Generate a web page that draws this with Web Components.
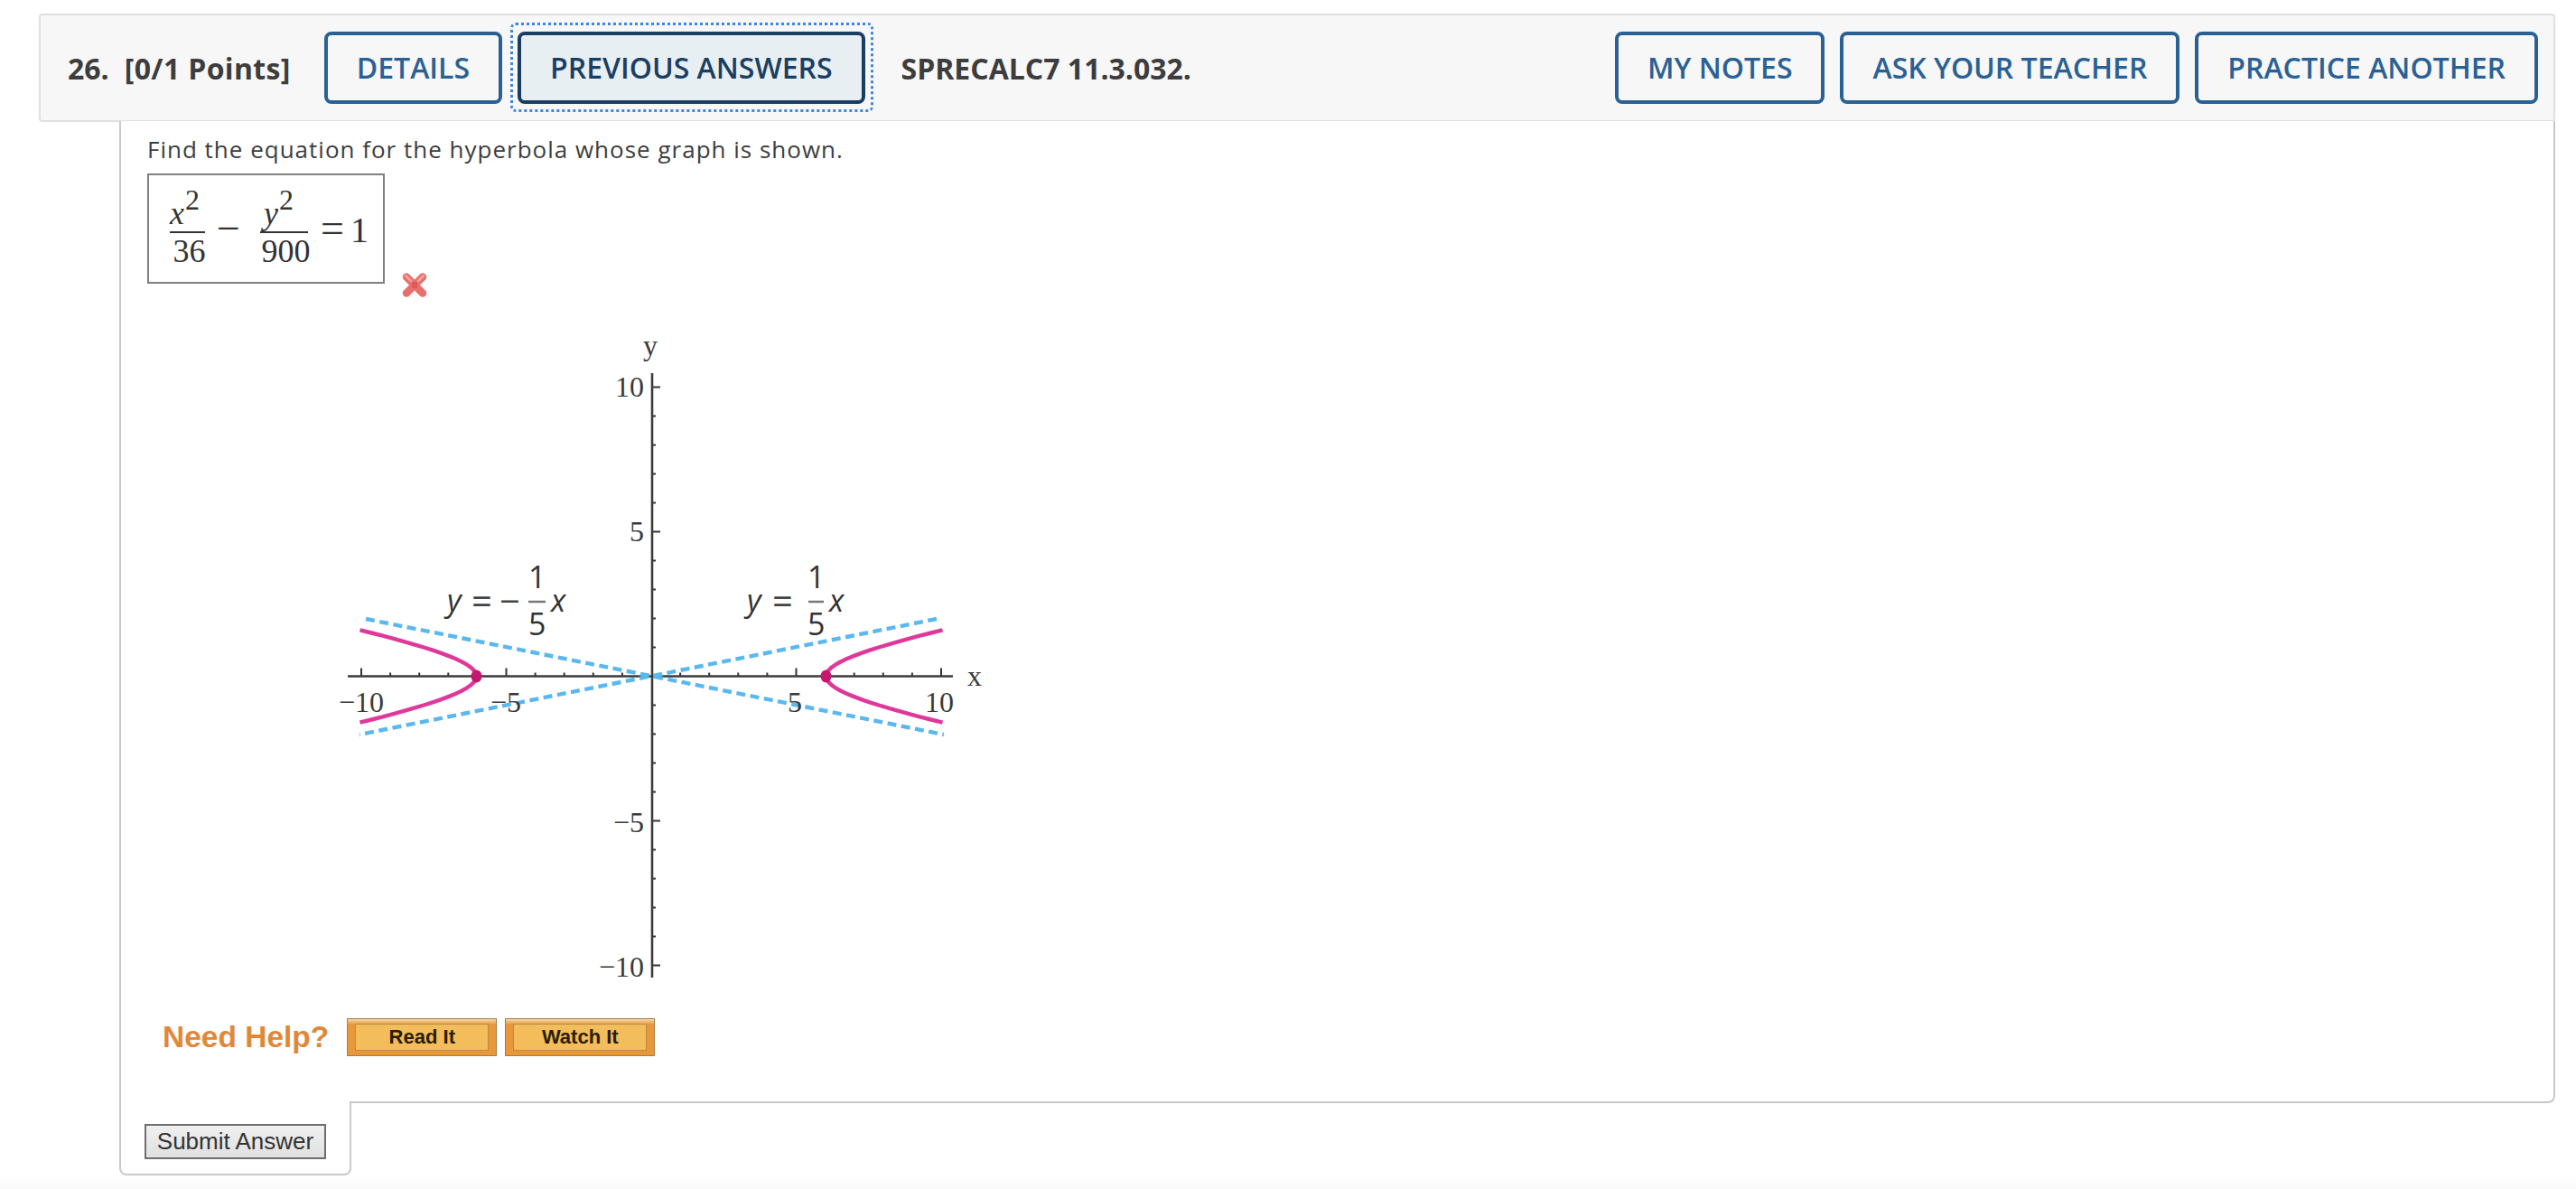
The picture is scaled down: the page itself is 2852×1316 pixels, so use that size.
<!DOCTYPE html>
<html>
<head>
<meta charset="utf-8">
<title>Question 26</title>
<style>
  html { min-height: 100vh; background: linear-gradient(#fff 1298px, #fafafa 1316px); }
  body { margin: 0; padding: 15px 23px 0 43px; font-family: "Open Sans", sans-serif; color: #3d3d3d; }
</style>
</head>
<body>
<question-card>
  <question-header slot="header" number="26." points="[0/1 Points]" code="SPRECALC7 11.3.032.">
    <action-button slot="left">DETAILS</action-button>
    <action-button slot="left" active>PREVIOUS ANSWERS</action-button>
    <action-button slot="right">MY NOTES</action-button>
    <action-button slot="right">ASK YOUR TEACHER</action-button>
    <action-button slot="right">PRACTICE ANOTHER</action-button>
  </question-header>
  <question-prompt slot="body">Find the equation for the hyperbola whose graph is shown.</question-prompt>
  <answer-row slot="body"></answer-row>
  <hyperbola-graph slot="body"></hyperbola-graph>
  <help-bar slot="body"></help-bar>
  <submit-tab slot="footer">Submit Answer</submit-tab>
</question-card>

<script>
class QuestionCard extends HTMLElement {
  constructor() {
    super();
    this.attachShadow({ mode: 'open' });
    this.shadowRoot.innerHTML = `
      <style>
        :host { display: block; width: 2786px; }
        .body {
          box-sizing: border-box;
          margin-left: 89px;
          height: 1087px;
          margin-top: -1px;
          padding: 0 29px;
          background: #fff;
          border: 2px solid #c9c9c9;
          border-top: 0;
          border-bottom-right-radius: 8px;
        }
        .footer { display: block; margin-left: 89px; margin-top: -2px; }
      </style>
      <slot name="header"></slot>
      <div class="body"><slot name="body"></slot></div>
      <div class="footer"><slot name="footer"></slot></div>
    `;
  }
}
customElements.define('question-card', QuestionCard);

class QuestionHeader extends HTMLElement {
  constructor() {
    super();
    this.attachShadow({ mode: 'open' });
  }

  connectedCallback() {
    this.shadowRoot.innerHTML = `
      <style>
        :host {
          display: flex;
          align-items: center;
          box-sizing: border-box;
          height: 120px;
          padding: 0 17px 0 30px;
          background: #f7f7f7;
          border: 2px solid #e0e0e0;
          border-radius: 4px;
          font: 600 32px "Open Sans", sans-serif;
          color: #3d3d3d;
        }
        .num { font-weight: 700; margin-right: 17px; }
        .pts { font-weight: 700; margin-right: 37px; letter-spacing: 0.35px; }
        .code { font-weight: 700; margin-left: 40px; }
        .left, .right { display: flex; gap: 17px; }
        .right { margin-left: auto; }
      </style>
      <span class="num">${this.getAttribute('number')}</span>
      <span class="pts">${this.getAttribute('points')}</span>
      <div class="left"><slot name="left"></slot></div>
      <span class="code">${this.getAttribute('code')}</span>
      <div class="right"><slot name="right"></slot></div>
    `;
  }
}
customElements.define('question-header', QuestionHeader);

class ActionButton extends HTMLElement {
  constructor() {
    super();
    this.attachShadow({ mode: 'open' });
    this.shadowRoot.innerHTML = `
      <style>
        :host {
          display: block;
          position: relative;
          box-sizing: border-box;
          height: 80px;
          padding: 0 32px;
          border: 4px solid #2a6195;
          border-radius: 8px;
          color: #2a6195;
          font: 600 32px/72px "Open Sans", sans-serif;
          white-space: nowrap;
        }
        :host([active]) {
          border-color: #1a3e63;
          color: #1a3e63;
          background: #e8eff3;
        }
        :host([active])::after {
          content: "";
          position: absolute;
          inset: -14px -13px -13px -12px;
          border: 3px dotted #3b86e0;
          border-radius: 6px;
        }
      </style>
      <slot></slot>
    `;
  }
}
customElements.define('action-button', ActionButton);

class QuestionPrompt extends HTMLElement {
  constructor() {
    super();
    this.attachShadow({ mode: 'open' });
    this.shadowRoot.innerHTML = `
      <style>
        :host {
          display: block;
          padding-top: 12px;
          font: 400 26px/38px "Open Sans", sans-serif;
          letter-spacing: 1px;
          color: #3d3d3d;
        }
      </style>
      <slot></slot>
    `;
  }
}
customElements.define('question-prompt', QuestionPrompt);

class AnswerRow extends HTMLElement {
  constructor() {
    super();
    this.attachShadow({ mode: 'open' });
    this.shadowRoot.innerHTML = `
      <style>
        :host { display: flex; align-items: flex-start; margin-top: 8px; font: 36px "Liberation Serif", serif; color: #333; }
        .box {
          box-sizing: border-box;
          display: flex;
          align-items: flex-start;
          width: 263px;
          height: 122px;
          padding: 0 0 0 23px;
          border: 2px solid #808080;
        }
        .frac { display: flex; flex-direction: column; align-items: center; }
        .num { align-self: flex-start; height: 62px; line-height: 84px; white-space: nowrap; }
        .den { height: 38px; line-height: 40px; margin-left: 4px; }
        .bar { align-self: stretch; height: 2px; background: #333; }
        i { font-style: italic; }
        sup { font-size: 32px; line-height: 0; position: relative; top: -16px; vertical-align: baseline; margin-left: 1px; }
        .op { font-size: 46px; line-height: 46px; margin-top: 36px; }
        .one { font-size: 40px; line-height: 46px; margin-top: 38px; }
        .x { margin: 110px 0 0 19px; }
      </style>
      <div class="box">
        <div class="frac" style="width:39px">
          <div class="num"><i>x</i><sup>2</sup></div><div class="bar"></div><div class="den">36</div>
        </div>
        <span class="op" style="margin-left:13px;margin-right:22px">&#8722;</span>
        <div class="frac" style="width:53px">
          <div class="num" style="margin-left:4px"><i>y</i><sup>2</sup></div><div class="bar"></div><div class="den">900</div>
        </div>
        <span class="op" style="margin-left:14px;margin-right:7px">=</span>
        <span class="one">1</span>
      </div>
      <svg class="x" width="28" height="27" viewBox="0 0 28 27">
        <path d="M5 4.5 L23 22.5 M23 4.5 L5 22.5" stroke="#e96f6f" stroke-width="8.5" stroke-linecap="round"/>
        <path d="M11 10 h6 v7 h-6 z" fill="#dc5a5a"/>
        <path d="M4 3 L10 9 M24 3 L18 9" stroke="#f3a5a2" stroke-width="2.5" stroke-linecap="round"/>
      </svg>
    `;
  }
}
customElements.define('answer-row', AnswerRow);

class HyperbolaGraph extends HTMLElement {
  constructor() {
    super();
    this.attachShadow({ mode: 'open' });
  }

  connectedCallback() {
    const ox = 722, cx = 721, oy = 748.5, u = 32.1;
    let ticks = '';
    for (let i = -10; i <= 10; i++) {
      if (i === 0) continue;
      const len = i % 5 === 0 ? 9 : 4;
      const px = cx + i * u, py = oy - i * 32;
      ticks += `<path d="M${px} ${oy} V${oy - len}"/>`;
      ticks += `<path d="M${ox} ${py} H${ox + len}"/>`;
    }
    const branch = sign => {
      const pts = [];
      for (let y = -1.6; y <= 1.6001; y += 0.1) {
        const x = sign * Math.sqrt(36 + 25 * y * y);
        pts.push(`${(cx + x * 32.25).toFixed(1)},${(oy - y * 32).toFixed(1)}`);
      }
      return pts.join(' ');
    };
    this.shadowRoot.innerHTML = `
      <style>
        :host { display: block; margin: 31px 0 0 197px; }
        svg { display: block; }
        .num { font: 32px "Liberation Serif", serif; fill: #3a3a3a; }
        .lab { font: 34px "Open Sans", sans-serif; fill: #333; }
        .eq { font: 40px "Open Sans", sans-serif; fill: #444; }
        .it { font-style: italic; }
      </style>
      <svg width="750" height="735" viewBox="360 360 750 735">
        <g stroke="#333" stroke-width="2" fill="none">${ticks}</g>
        <path d="M385 ${oy} H1055 M${ox} 413 V1082" stroke="#3c3c3c" stroke-width="2.6" fill="none"/>
        <g stroke="#5bb8ee" stroke-width="4.4" stroke-dasharray="10 5.5" fill="none">
          <path d="M405 685 L1045 813"/>
          <path d="M1037 685 L398 813"/>
        </g>
        <g stroke="#e0389a" stroke-width="4.4" fill="none" stroke-linejoin="round">
          <polyline points="${branch(-1)}"/>
          <polyline points="${branch(1)}"/>
        </g>
        <ellipse cx="${cx - 6 * 32.25}" cy="${oy}" rx="6" ry="7" fill="#c4186f"/>
        <ellipse cx="${cx + 6 * 32.25}" cy="${oy}" rx="6" ry="7" fill="#c4186f"/>

        <text class="num" x="728" y="393" text-anchor="end">y</text>
        <text class="num" x="1071" y="759">x</text>
        <text class="num" x="713" y="439" text-anchor="end">10</text>
        <text class="num" x="713" y="599" text-anchor="end">5</text>
        <text class="num" x="713" y="921" text-anchor="end">&#8722;5</text>
        <text class="num" x="713" y="1081" text-anchor="end">&#8722;10</text>
        <text class="num" x="425" y="788" text-anchor="end">&#8722;10</text>
        <text class="num" x="577" y="788" text-anchor="end">&#8722;5</text>
        <text class="num" x="888" y="788" text-anchor="end">5</text>
        <text class="num" x="1056" y="788" text-anchor="end">10</text>

        <text class="lab it" x="495" y="677">y</text>
        <text class="eq" x="522" y="680">=</text>
        <text class="eq" x="553" y="680">&#8722;</text>
        <text class="lab" x="585" y="651">1</text>
        <path d="M585 666 H604" stroke="#777" stroke-width="2.5"/>
        <text class="lab" x="585" y="703">5</text>
        <text class="lab it" x="610" y="677">x</text>

        <text class="lab it" x="827" y="677">y</text>
        <text class="eq" x="855" y="680">=</text>
        <text class="lab" x="894" y="651">1</text>
        <path d="M895 666 H912" stroke="#777" stroke-width="2.5"/>
        <text class="lab" x="894" y="703">5</text>
        <text class="lab it" x="918" y="677">x</text>
      </svg>
    `;
  }
}
customElements.define('hyperbola-graph', HyperbolaGraph);

class HelpBar extends HTMLElement {
  constructor() {
    super();
    this.attachShadow({ mode: 'open' });
    this.shadowRoot.innerHTML = `
      <style>
        :host { display: flex; align-items: center; margin: 32px 0 0 17px; height: 42px; font-family: "Liberation Sans", sans-serif; }
        .need { font: 700 33.5px "Liberation Sans", sans-serif; color: #e0883a; margin-right: 20px; }
        .btn {
          box-sizing: border-box;
          width: 166px;
          height: 42px;
          padding: 5px 8px;
          margin-right: 9px;
          background: linear-gradient(#f6d9ad 0, #e8973a 6px);
          border: 1px solid #a87b45;
        }
        .btn span {
          display: block;
          height: 30px;
          background: #f2bd5a;
          border: 1px solid #b98a45;
          box-sizing: border-box;
          text-align: center;
          font: 700 22px/28px "Liberation Sans", sans-serif;
          color: #2a1c05;
        }
      </style>
      <span class="need">Need Help?</span>
      <div class="btn"><span>Read It</span></div>
      <div class="btn"><span>Watch It</span></div>
    `;
  }
}
customElements.define('help-bar', HelpBar);

class SubmitTab extends HTMLElement {
  constructor() {
    super();
    this.attachShadow({ mode: 'open' });
    this.shadowRoot.innerHTML = `
      <style>
        :host {
          display: block;
          position: relative;
          box-sizing: border-box;
          width: 257px;
          height: 82px;
          padding: 25px 0 0 26px;
          background: #fff;
          border: 2px solid #c9c9c9;
          border-top: 0;
          border-radius: 0 0 8px 8px;
        }
        button {
          display: block;
          box-sizing: border-box;
          width: 201px;
          height: 39px;
          padding: 0;
          background: linear-gradient(#f0f0f0, #e0e0e0);
          border: 2px solid #6e6e6e;
          font: 26px "Liberation Sans", sans-serif;
          color: #333;
        }
      </style>
      <button type="button"><slot></slot></button>
    `;
  }
}
customElements.define('submit-tab', SubmitTab);
</script>
</body>
</html>
